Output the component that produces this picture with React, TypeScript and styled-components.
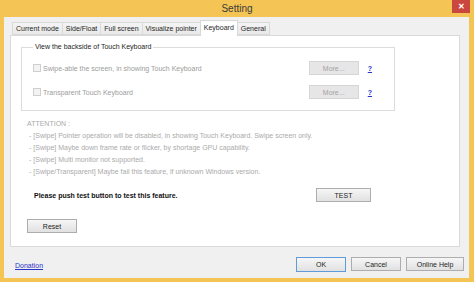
import styled, { createGlobalStyle } from "styled-components";

const GlobalStyle = createGlobalStyle`
  html, body {
    margin: 0;
    padding: 0;
    background: #f4c555;
  }
  body {
    font-family: "Liberation Sans", Arial, sans-serif;
    font-size: 7px;
    color: #1e1e1e;
  }
`;

const Window = styled.div`
  width: 474px;
  height: 282px;
  background: #f4c555;
  display: flex;
  flex-direction: column;
  overflow: hidden;
`;

const TitleBar = styled.div`
  position: relative;
  height: 17px;
  display: flex;
  align-items: center;
  justify-content: center;
  font-size: 10px;
  color: #3a3a3a;
`;

const CloseButton = styled.div`
  position: absolute;
  top: 0;
  right: 4px;
  width: 18px;
  height: 13px;
  background: #c9473f;
  color: #fff;
  display: flex;
  align-items: center;
  justify-content: center;
  font-size: 8px;
  font-weight: bold;
`;

const Client = styled.div`
  flex: 1;
  margin: 0 5px 4px 4px;
  background: #f0f0f0;
  padding: 3px 9px 0 6px;
  display: flex;
  flex-direction: column;
`;

const TabRow = styled.div`
  display: flex;
  align-items: flex-end;
  height: 15px;
  padding-left: 2px;
  position: relative;
  z-index: 1;
`;

const Tab = styled.div<{ active?: boolean }>`
  box-sizing: border-box;
  height: ${({ active }) => (active ? "16px" : "13px")};
  margin-bottom: ${({ active }) => (active ? "-1px" : "0")};
  padding: ${({ active }) => (active ? "0 3px 2px" : "0 3px")};
  display: flex;
  align-items: center;
  border: 1px solid #d9d9d9;
  border-bottom: ${({ active }) => (active ? "none" : "1px solid #d9d9d9")};
  margin-right: -1px;
  background: ${({ active }) =>
    active ? "#ffffff" : "linear-gradient(#f4f4f4, #e9e9e9)"};
  color: #1e1e1e;
  white-space: nowrap;
`;

const Panel = styled.div`
  box-sizing: border-box;
  height: 212px;
  background: #ffffff;
  border: 1px solid #d9d9d9;
  padding: 7px 10px 0 10px;
  display: flex;
  flex-direction: column;
  align-items: flex-start;
`;

const Group = styled.fieldset`
  box-sizing: border-box;
  width: 374px;
  height: 68px;
  margin: 0;
  padding: 10px 11px 0 11px;
  border: 1px solid #dcdcdc;
  min-width: 0;
  display: flex;
  flex-direction: column;
  gap: 10px;
`;

const Legend = styled.legend`
  padding: 0 2px;
  margin-left: 0;
  line-height: 8px;
  color: #1e1e1e;
`;

const OptionRow = styled.div`
  height: 14px;
  display: flex;
  align-items: center;
`;

const CheckBox = styled.span`
  box-sizing: border-box;
  width: 8px;
  height: 8px;
  border: 1px solid #cfcfcf;
  background: #f3f3f3;
  flex: none;
`;

const OptionLabel = styled.span`
  flex: 1;
  margin-left: 2px;
  color: #9c9c9c;
`;

const Button = styled.div<{ disabled?: boolean; primary?: boolean; width?: number }>`
  box-sizing: border-box;
  width: ${({ width }) => width ?? 50}px;
  height: ${({ primary }) => (primary ? 15 : 14)}px;
  display: flex;
  align-items: center;
  justify-content: center;
  flex: none;
  border: 1px solid
    ${({ disabled, primary }) =>
      primary ? "#5f9bd8" : disabled ? "#d6d6d6" : "#adadad"};
  background: ${({ disabled }) =>
    disabled ? "#e6e6e6" : "linear-gradient(#f6f6f6, #e1e1e1)"};
  color: ${({ disabled }) => (disabled ? "#a3a3a3" : "#1e1e1e")};
`;

const HelpLink = styled.span`
  margin: 0 11px 0 9px;
  color: #2233cc;
  text-decoration: underline;
  font-weight: bold;
`;

const Notes = styled.div`
  margin-top: 7px;
  line-height: 12px;
  color: #aaaaaa;
  display: flex;
  flex-direction: column;
`;

const NoteTitle = styled.div`
  margin-left: 6px;
`;

const NoteLine = styled.div`
  margin-left: 8px;
  white-space: nowrap;
`;

const TestRow = styled.div`
  margin-top: 10px;
  width: 350px;
  display: grid;
  grid-template-columns: 1fr 55px;
  align-items: center;
`;

const TestText = styled.div`
  margin-left: 13px;
  font-weight: bold;
  color: #111;
`;

const ResetWrap = styled.div`
  margin: 17px 0 0 6px;
`;

const Footer = styled.div`
  flex: 1;
  display: flex;
  align-items: center;
  padding: 3px 0 0 5px;
  margin-right: -4px;
  gap: 5px;
`;

const Donation = styled.span`
  flex: 1;
  margin-top: 3px;
  color: #2a33c8;
  text-decoration: underline;
`;

const notes = [
  "- [Swipe] Pointer operation will be disabled, in showing Touch Keyboard. Swipe screen only.",
  "- [Swipe] Maybe down frame rate or flicker, by shortage GPU capability.",
  "- [Swipe] Multi monitor not supported.",
  "- [Swipe/Transparent] Maybe fail this feature, if unknown Windows version.",
];

const tabs = [
  "Current mode",
  "Side/Float",
  "Full screen",
  "Visualize pointer",
  "Keyboard",
  "General",
];

export default function App() {
  return (
    <>
      <GlobalStyle />
      <Window>
        <TitleBar>
          Setting
          <CloseButton>✕</CloseButton>
        </TitleBar>
        <Client>
          <TabRow>
            {tabs.map((t) => (
              <Tab key={t} active={t === "Keyboard"}>
                {t}
              </Tab>
            ))}
          </TabRow>
          <Panel>
            <Group>
              <Legend>View the backside of Touch Keyboard</Legend>
              <OptionRow>
                <CheckBox />
                <OptionLabel>Swipe-able the screen, in showing Touch Keyboard</OptionLabel>
                <Button disabled>More...</Button>
                <HelpLink>?</HelpLink>
              </OptionRow>
              <OptionRow>
                <CheckBox />
                <OptionLabel>Transparent Touch Keyboard</OptionLabel>
                <Button disabled>More...</Button>
                <HelpLink>?</HelpLink>
              </OptionRow>
            </Group>
            <Notes>
              <NoteTitle>ATTENTION :</NoteTitle>
              {notes.map((n) => (
                <NoteLine key={n}>{n}</NoteLine>
              ))}
            </Notes>
            <TestRow>
              <TestText>Please push test button to test this feature.</TestText>
              <Button width={55}>TEST</Button>
            </TestRow>
            <ResetWrap>
              <Button>Reset</Button>
            </ResetWrap>
          </Panel>
          <Footer>
            <Donation>Donation</Donation>
            <Button primary>OK</Button>
            <Button width={50}>Cancel</Button>
            <Button width={58}>Online Help</Button>
          </Footer>
        </Client>
      </Window>
    </>
  );
}
